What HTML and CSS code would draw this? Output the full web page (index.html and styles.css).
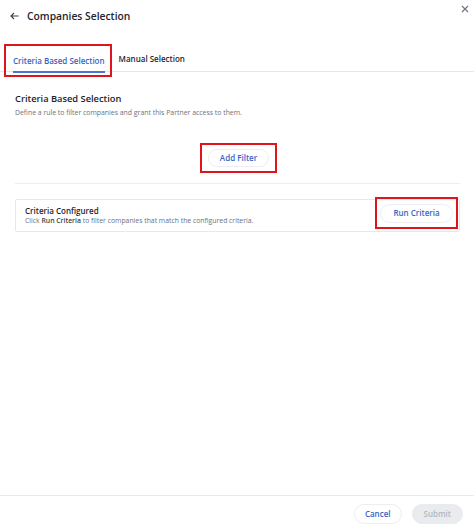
FILE: index.html
```html
<!DOCTYPE html>
<html>
<head>
<meta charset="utf-8">
<link rel="stylesheet" href="styles.css">
</head>
<body>
<div class="page">
  <header class="header">
    <div class="title-wrap">
      <svg class="back" width="9" height="8" viewBox="0 0 9 8"><path d="M8.5 4H1M4 1 1 4l3 3" fill="none" stroke="#3a3f4a" stroke-width="1.1"/></svg>
      <h1 class="title">Companies Selection</h1>
    </div>
    <svg class="close" width="8" height="8" viewBox="0 0 8 8"><path d="M1 1l6 6M7 1 1 7" stroke="#6b7280" stroke-width="1.1"/></svg>
  </header>
  <nav class="tabs">
    <div class="mark tab-mark">
      <div class="tab active">Criteria Based Selection</div>
    </div>
    <div class="tab">Manual Selection</div>
  </nav>
  <main class="content">
    <h2 class="heading">Criteria Based Selection</h2>
    <p class="sub">Define a rule to filter companies and grant this Partner access to them.</p>
    <div class="filter-row">
      <div class="mark filter-mark"><button class="pill">Add Filter</button></div>
    </div>
    <div class="sep"></div>
    <div class="card">
      <div class="card-text">
        <div class="card-title">Criteria Configured</div>
        <div class="card-sub">Click <b>Run Criteria</b> to filter companies that match the configured criteria.</div>
      </div>
      <div class="mark run-mark"><button class="pill">Run Criteria</button></div>
    </div>
  </main>
  <footer class="footer">
    <button class="pill small">Cancel</button>
    <button class="pill small disabled">Submit</button>
  </footer>
</div>
</body>
</html>
```
FILE: styles.css
```css
* { box-sizing: border-box; }
html, body { margin: 0; padding: 0; background: #fff; }
body { font-family: "Open Sans", "Noto Sans", sans-serif; color: #1f2430; }
.page { width: 474px; height: 526px; display: flex; flex-direction: column; }
.header { height: 32px; display: flex; align-items: flex-start; justify-content: space-between; padding: 0 5px 0 10px; }
.title-wrap { display: flex; align-items: center; gap: 8px; height: 31px; }
.back { display: block; }
.title { margin: 0; font-size: 10.3px; font-weight: 600; color: #1f2430; }
.close { margin-top: 5px; }
.tabs { margin-top: 12px; height: 28px; border-bottom: 1px solid #e4e6ea; display: flex; align-items: stretch; padding-left: 4px; }
.mark { border: 2px solid #e0141b; }
.tab-mark { height: 33px; display: flex; padding: 0 5px 0 7px; }
.tab { font-size: 8px; font-weight: 600; color: #222733; display: flex; align-items: center; padding-top: 1px; height: 27px; }
.tab.active { color: #3566c4; border-bottom: 2px solid #4a76cf; height: 27px; padding-top: 3px; }
.tabs > .tab { margin-left: 7px; }
.content { flex: 1; padding: 0 14px 0 15px; }
.heading { margin: 20px 0 0; font-size: 9.3px; font-weight: 600; line-height: 14px; color: #1a1e28; }
.sub { margin: 2px 0 0; font-size: 6.9px; color: #6b7280; line-height: 10px; }
.filter-row { display: flex; justify-content: center; margin-top: 25px; padding-left: 2px; }
.filter-mark { width: 77px; height: 30px; display: flex; align-items: center; justify-content: center; }
.pill { font-family: inherit; font-size: 8px; font-weight: 600; color: #3566c4; background: #fff; border: 1px solid #eceef2; border-radius: 10px; height: 18px; padding: 0 11px; line-height: 16px; }
.sep { height: 1px; background: #eceef0; margin-top: 10px; }
.card { margin-top: 15px; height: 33px; border: 1px solid #e6e8eb; border-radius: 2px; display: flex; align-items: center; justify-content: space-between; padding: 0 0 0 9px; position: relative; }
.card-title { font-size: 8px; font-weight: 600; line-height: 11px; }
.card-sub { font-size: 6.85px; color: #6b7280; line-height: 10px; }
.card-sub b { font-weight: 600; color: #3a3f4a; }
.run-mark { width: 83px; height: 32px; display: flex; align-items: center; justify-content: center; margin-top: -5px; margin-right: 1px; }
.run-mark .pill { height: 19px; padding: 0 12px; }
.footer { height: 31px; border-top: 1px solid #e8eaed; display: flex; justify-content: flex-end; align-items: flex-start; gap: 10px; padding: 8px 11px 0 0; }
.pill.small { height: 20px; padding: 0 10px; border-radius: 10px; }
.pill.disabled { background: #e9ebee; border-color: #e9ebee; color: #b3b8c0; padding: 0 11px; }
```
